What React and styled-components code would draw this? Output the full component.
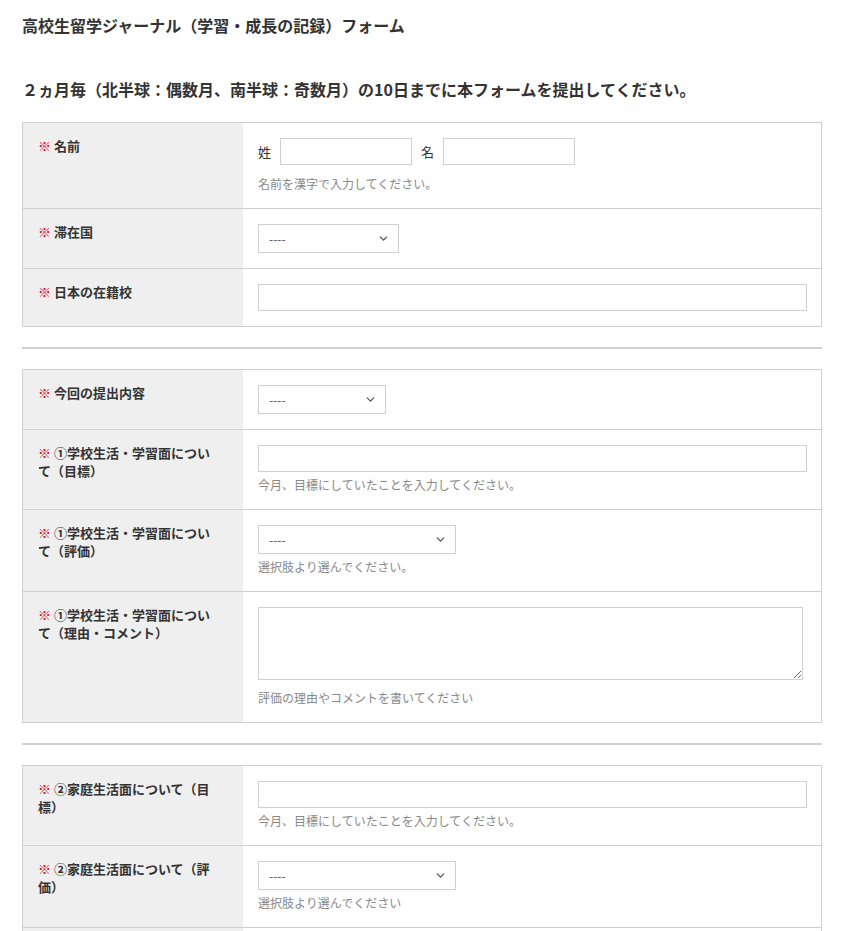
import React from 'react';
import styled, {createGlobalStyle} from 'styled-components';
import {ChevronDown} from 'lucide-react';

const GlobalStyle = createGlobalStyle`
  body {
    margin: 0;
    background: #fff;
    color: #333;
    font-family: "Noto Sans CJK JP", "Noto Sans", sans-serif;
  }
`;

const sections = [
  [
    {label: ['名前'], type: 'name', help: '名前を漢字で入力してください。'},
    {label: ['滞在国'], type: 'select', width: 141},
    {label: ['日本の在籍校'], type: 'text'},
  ],
  [
    {label: ['今回の提出内容'], type: 'select', width: 128},
    {label: ['①学校生活・学習面につい', 'て（目標）'], type: 'text', help: '今月、目標にしていたことを入力してください。'},
    {label: ['①学校生活・学習面につい', 'て（評価）'], type: 'select', width: 198, help: '選択肢より選んでください。'},
    {label: ['①学校生活・学習面につい', 'て（理由・コメント）'], type: 'textarea', help: '評価の理由やコメントを書いてください'},
  ],
  [
    {label: ['②家庭生活面について（目', '標）'], type: 'text', help: '今月、目標にしていたことを入力してください。'},
    {label: ['②家庭生活面について（評', '価）'], type: 'select', width: 198, help: '選択肢より選んでください'},
    {label: ['②家庭生活面について（理', '由・コメント）'], type: 'textarea', help: '評価の理由やコメントを書いてください'},
  ],
];

const Field = ({item}) => {
  if (item.type === 'name') {
    return (
      <NameLine>
        <span>姓</span>
        <TextInput $width={132} />
        <span>名</span>
        <TextInput $width={132} />
      </NameLine>
    );
  }
  if (item.type === 'select') {
    return (
      <SelectWrap $width={item.width}>
        <Select defaultValue="">
          <option value="">----</option>
        </Select>
        <Arrow size={13} strokeWidth={2.4} />
      </SelectWrap>
    );
  }
  if (item.type === 'textarea') {
    return <TextArea />;
  }
  return <TextInput />;
};

const App = () => {
  return (
    <Page>
      <GlobalStyle />
      <Title>高校生留学ジャーナル（学習・成長の記録）フォーム</Title>
      <Lead>２ヵ月毎（北半球：偶数月、南半球：奇数月）の10日までに本フォームを提出してください。</Lead>
      {sections.map((rows, i) => (
        <React.Fragment key={i}>
          {i > 0 && <Divider />}
          <Table>
            {rows.map((item, j) => (
              <Row key={j}>
                <Label>
                  {item.label.map((line, k) => (
                    <React.Fragment key={k}>
                      {k === 0 && <Mark>※</Mark>}
                      {k === 0 ? ' ' : ''}
                      {line}
                      {k < item.label.length - 1 && <br />}
                    </React.Fragment>
                  ))}
                </Label>
                <Value>
                  <Field item={item} />
                  {item.help && <Help $wide={item.type === 'name'}>{item.help}</Help>}
                </Value>
              </Row>
            ))}
          </Table>
        </React.Fragment>
      ))}
    </Page>
  );
};

const Page = styled.div`
  width: 800px;
  margin-left: 22px;
  padding-top: 13px;
  padding-bottom: 40px;
`;

const Title = styled.h1`
  margin: 0;
  font-size: 16px;
  line-height: 24px;
  font-weight: 700;
  color: #333;
`;

const Lead = styled.p`
  margin: 40px 0 21px;
  font-size: 16px;
  line-height: 24px;
  font-weight: 700;
  color: #333;
`;

const Divider = styled.hr`
  margin: 20px 0;
  border: none;
  height: 2px;
  background: #d0d0d0;
`;

const Table = styled.div`
  border: 1px solid #cfcfcf;
`;

const Row = styled.div`
  display: grid;
  grid-template-columns: 220px 1fr;
  & + & {
    border-top: 1px solid #cfcfcf;
  }
`;

const Label = styled.div`
  background: #efefef;
  padding: 14px 10px 14px 15px;
  font-size: 13px;
  line-height: 18px;
  font-weight: 700;
  color: #333;
`;

const Mark = styled.span`
  color: #e60012;
  font-weight: 400;
`;

const Value = styled.div`
  padding: 15px 14px 15px 15px;
  min-width: 0;
`;

const NameLine = styled.div`
  display: flex;
  align-items: center;
  gap: 9px;
  font-size: 13px;
  color: #333;
`;

const TextInput = styled.input.attrs({type: 'text'})`
  box-sizing: border-box;
  display: block;
  width: ${p => (p.$width ? `${p.$width}px` : '100%')};
  height: 27px;
  margin: 0;
  padding: 0 8px;
  border: 1px solid #d0d0d0;
  border-radius: 0;
  background: #fff;
  font: inherit;
  font-size: 13px;
  outline: none;
`;

const SelectWrap = styled.div`
  position: relative;
  width: ${p => p.$width}px;
  height: 29px;
`;

const Select = styled.select`
  box-sizing: border-box;
  appearance: none;
  width: 100%;
  height: 29px;
  margin: 0;
  padding: 0 24px 0 10px;
  border: 1px solid #d0d0d0;
  border-radius: 0;
  background: #fff;
  color: #555;
  font-family: inherit;
  font-size: 12px;
  outline: none;
`;

const Arrow = styled(ChevronDown)`
  position: absolute;
  right: 9px;
  top: 8px;
  color: #555;
  pointer-events: none;
`;

const TextArea = styled.textarea`
  box-sizing: border-box;
  display: block;
  width: 545px;
  height: 73px;
  margin: 0 0 9px;
  padding: 6px 8px;
  border: 1px solid #d0d0d0;
  border-radius: 0;
  font: inherit;
  font-size: 13px;
  outline: none;
`;

const Help = styled.p`
  margin: ${p => (p.$wide ? '10px' : '4px')} 0 0;
  font-size: 12px;
  line-height: 18px;
  color: #888;
`;

export default App;
